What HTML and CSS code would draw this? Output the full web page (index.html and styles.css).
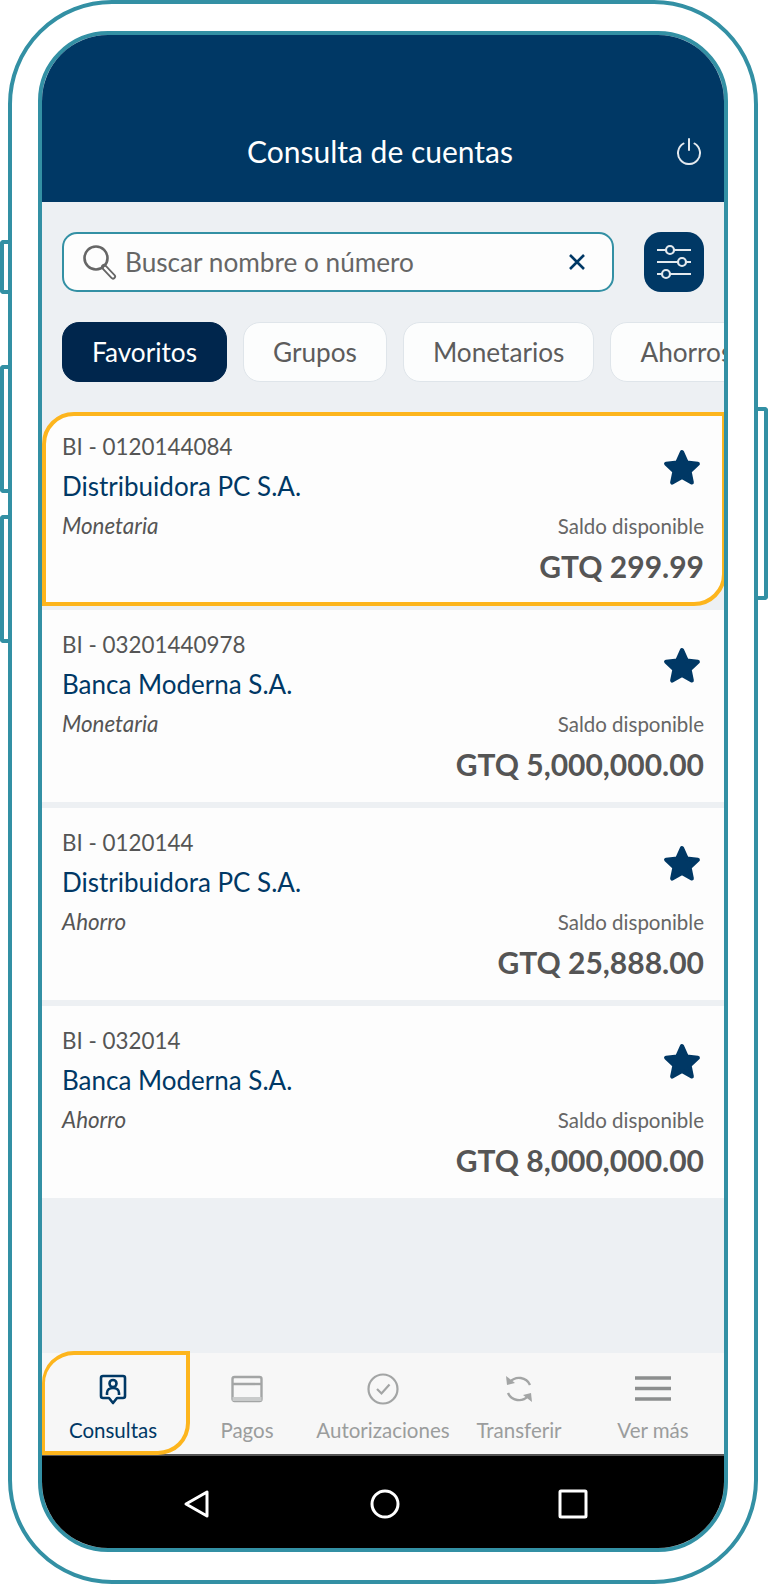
FILE: index.html
```html
<!DOCTYPE html>
<html lang="es">
  <head>
    <meta charset="UTF-8" />
    <title>Consulta de cuentas</title>
    <link rel="stylesheet" href="styles.css">
  </head>
  <body>
    <div class="phone">
      <span class="side-btn side-a"></span>
      <span class="side-btn side-b"></span>
      <span class="side-btn side-c"></span>
      <span class="side-btn side-d"></span>

      <div class="frame">
        <div class="screen">
          <header class="topbar">
            <span></span>
            <h1>Consulta de cuentas</h1>
            <svg class="power" viewBox="0 0 28 28" fill="none" stroke="#e4e9ee" stroke-width="2" stroke-linecap="round">
              <path d="M14 2v11" />
              <path d="M8.5 6.5a11 11 0 1 0 11 0" />
            </svg>
          </header>

          <div class="search-row">
            <div class="search">
              <svg class="search-icon" viewBox="0 0 36 36" fill="none" stroke="#666">
                <circle cx="14" cy="14" r="11.5" stroke-width="2.6" />
                <path d="M22 23l9 9.5" stroke-width="6" stroke-linecap="round" />
                <path d="M23 24l8 8.5" stroke="#fff" stroke-width="2.4" stroke-linecap="round" />
              </svg>
              <span class="search-text">Buscar nombre o número</span>
              <svg class="clear" viewBox="0 0 18 18" fill="none" stroke="#003865" stroke-width="2.6">
                <path d="M2 2l14 14M16 2L2 16" />
              </svg>
            </div>
            <button class="filter">
              <svg viewBox="0 0 36 36" fill="none" stroke="#e4e9ee" stroke-width="2.2">
                <path d="M1 6h9M18 6h17M1 18h21M30 18h5M1 30h5M14 30h21" />
                <circle cx="14" cy="6" r="4" />
                <circle cx="26" cy="18" r="4" />
                <circle cx="10" cy="30" r="4" />
              </svg>
            </button>
          </div>

          <div class="chips">
            <span class="chip active">Favoritos</span>
            <span class="chip">Grupos</span>
            <span class="chip">Monetarios</span>
            <span class="chip">Ahorros</span>
          </div>

          <div class="accounts">
            <div class="card focus">
              <div class="card-left">
                <p class="acc-no">BI - 0120144084</p>
                <p class="acc-name">Distribuidora PC S.A.</p>
                <p class="acc-type">Monetaria</p>
              </div>
              <div class="card-right">
                <svg class="star" viewBox="0 0 34 34"><path d="M17 5l3.8 8.4 9 1-6.7 6.2 1.8 8.9-7.9-4.4-7.9 4.4 1.8-8.9-6.7-6.2 9-1z" /></svg>
                <p class="balance-label">Saldo disponible</p>
                <p class="balance">GTQ 299.99</p>
              </div>
            </div>
            <div class="card">
              <div class="card-left">
                <p class="acc-no">BI - 03201440978</p>
                <p class="acc-name">Banca Moderna S.A.</p>
                <p class="acc-type">Monetaria</p>
              </div>
              <div class="card-right">
                <svg class="star" viewBox="0 0 34 34"><path d="M17 5l3.8 8.4 9 1-6.7 6.2 1.8 8.9-7.9-4.4-7.9 4.4 1.8-8.9-6.7-6.2 9-1z" /></svg>
                <p class="balance-label">Saldo disponible</p>
                <p class="balance">GTQ 5,000,000.00</p>
              </div>
            </div>
            <div class="card">
              <div class="card-left">
                <p class="acc-no">BI - 0120144</p>
                <p class="acc-name">Distribuidora PC S.A.</p>
                <p class="acc-type">Ahorro</p>
              </div>
              <div class="card-right">
                <svg class="star" viewBox="0 0 34 34"><path d="M17 5l3.8 8.4 9 1-6.7 6.2 1.8 8.9-7.9-4.4-7.9 4.4 1.8-8.9-6.7-6.2 9-1z" /></svg>
                <p class="balance-label">Saldo disponible</p>
                <p class="balance">GTQ 25,888.00</p>
              </div>
            </div>
            <div class="card">
              <div class="card-left">
                <p class="acc-no">BI - 032014</p>
                <p class="acc-name">Banca Moderna S.A.</p>
                <p class="acc-type">Ahorro</p>
              </div>
              <div class="card-right">
                <svg class="star" viewBox="0 0 34 34"><path d="M17 5l3.8 8.4 9 1-6.7 6.2 1.8 8.9-7.9-4.4-7.9 4.4 1.8-8.9-6.7-6.2 9-1z" /></svg>
                <p class="balance-label">Saldo disponible</p>
                <p class="balance">GTQ 8,000,000.00</p>
              </div>
            </div>
          </div>

          <nav class="tabs">
            <div class="tab current">
              <svg viewBox="0 0 36 36" fill="none" stroke="#003865" stroke-width="2.6" stroke-linejoin="round">
                <path d="M8 5h20a2 2 0 0 1 2 2v18a2 2 0 0 1-2 2h-6l-4 5-4-5H8a2 2 0 0 1-2-2V7a2 2 0 0 1 2-2z" />
                <circle cx="18" cy="12.5" r="3.5" />
                <path d="M12 24v-2c0-3 2.5-5 6-5s6 2 6 5v2" />
              </svg>
              <span>Consultas</span>
            </div>
            <div class="tab">
              <svg viewBox="0 0 36 36" fill="none" stroke="#a3a5a5" stroke-width="2.4">
                <rect x="3.5" y="6" width="29" height="24" rx="2" />
                <path d="M3.5 13h29" />
                <path d="M3.5 26h29v4h-29z" fill="#c9cbcb" stroke="none" />
              </svg>
              <span>Pagos</span>
            </div>
            <div class="tab">
              <svg viewBox="0 0 36 36" fill="none" stroke="#a3a5a5" stroke-width="2.2">
                <circle cx="18" cy="18" r="14.5" />
                <path d="M12 18l4.5 4.5 8-9" />
              </svg>
              <span>Autorizaciones</span>
            </div>
            <div class="tab">
              <svg viewBox="0 0 36 36" fill="none" stroke="#a3a5a5" stroke-width="2.4">
                <path d="M9 11a12 12 0 0 1 20 3" />
                <path d="M27 25a12 12 0 0 1-20-3" />
                <path d="M5 5l1 9 8-2z" fill="#a3a5a5" stroke="none" />
                <path d="M31 31l-1-9-8 2z" fill="#a3a5a5" stroke="none" />
              </svg>
              <span>Transferir</span>
            </div>
            <div class="tab">
              <svg viewBox="0 0 36 36" fill="none" stroke="#8c8e8e" stroke-width="3.4">
                <path d="M0 7h36M0 17.5h36M0 28h36" />
              </svg>
              <span>Ver más</span>
            </div>
          </nav>

          <div class="android">
            <svg class="nav-back" viewBox="0 0 28 30" fill="none" stroke="#fff" stroke-width="3" stroke-linejoin="round">
              <path d="M24 3v24L3 15z" />
            </svg>
            <svg class="nav-home" viewBox="0 0 30 30" fill="none" stroke="#fff" stroke-width="3">
              <circle cx="15" cy="15" r="13" />
            </svg>
            <svg class="nav-recent" viewBox="0 0 30 30" fill="none" stroke="#fff" stroke-width="3" stroke-linejoin="round">
              <rect x="2" y="2" width="26" height="26" rx="1" />
            </svg>
          </div>
        </div>
      </div>
    </div>
  </body>
</html>
```

FILE: styles.css
```css
body {
  margin: 0;
  background-color: #fff;
  font-family: "Lato", "Open Sans", sans-serif;
}

p {
  margin: 0;
}

.phone {
  position: relative;
  width: 768px;
  height: 1585px;
  overflow: hidden;
  padding-left: 8px;
  box-sizing: border-box;
}

.side-btn {
  position: absolute;
  box-sizing: border-box;
  border: 4px solid #3390a4;
  width: 9px;
}

.side-a,
.side-b,
.side-c {
  left: 0;
  border-right: 0;
  border-radius: 4px 0 0 4px;
}

.side-a {
  top: 240px;
  height: 54px;
}

.side-b {
  top: 365px;
  height: 128px;
}

.side-c {
  top: 515px;
  height: 128px;
}

.side-d {
  left: 757px;
  top: 407px;
  width: 11px;
  height: 193px;
  border-left: 0;
  border-radius: 0 4px 4px 0;
}

.frame {
  width: 750px;
  height: 1584px;
  box-sizing: border-box;
  border: 4px solid #3390a4;
  border-radius: 104px;
  padding: 27px 26px 28px;
  background-color: #fff;
}

.screen {
  height: 100%;
  box-sizing: border-box;
  border: 4px solid #3390a4;
  border-radius: 70px;
  background-color: #edf0f3;
  overflow: hidden;
  display: flex;
  flex-direction: column;
}

.topbar {
  height: 167px;
  flex-shrink: 0;
  box-sizing: border-box;
  background-color: #003865;
  display: grid;
  grid-template-columns: 1fr auto 1fr;
  align-items: center;
  padding: 93px 21px 28px 15px;
}

.topbar h1 {
  margin: 0;
  font-size: 30px;
  font-weight: 400;
  color: #fff;
  line-height: 44px;
}

.power {
  width: 28px;
  height: 28px;
  justify-self: end;
}

.search-row {
  display: flex;
  gap: 30px;
  margin-top: 30px;
  padding: 0 20px;
}

.search {
  flex: 1;
  height: 60px;
  box-sizing: border-box;
  border: 2px solid #3390a4;
  border-radius: 15px;
  background-color: #fdfdfd;
  display: flex;
  align-items: center;
  padding: 0 26px 0 18px;
}

.search-icon {
  width: 36px;
  height: 36px;
  margin-right: 7px;
}

.search-text {
  flex: 1;
  font-size: 26.2px;
  color: #666;
}

.clear {
  width: 18px;
  height: 18px;
}

.filter {
  width: 60px;
  height: 60px;
  border: 0;
  border-radius: 17px;
  padding: 0;
  background-color: #003865;
  display: flex;
  align-items: center;
  justify-content: center;
}

.filter svg {
  width: 36px;
  height: 36px;
}

.chips {
  display: flex;
  gap: 16px;
  margin-top: 30px;
  padding-left: 20px;
  overflow: hidden;
}

.chip {
  flex-shrink: 0;
  height: 60px;
  box-sizing: border-box;
  padding: 0 29px;
  border: 1px solid #dfe5ea;
  border-radius: 17px;
  background-color: #fcfdfd;
  font-size: 26.2px;
  line-height: 58px;
  color: #5c5c5c;
}

.chip.active {
  background-color: #00264d;
  border-color: #00264d;
  color: #fff;
}

.accounts {
  margin-top: 30px;
  flex: 1;
  display: flex;
  flex-direction: column;
  gap: 6px;
}

.card {
  height: 192px;
  box-sizing: border-box;
  padding: 22px 20px 0;
  background-color: #fdfdfd;
  display: flex;
  justify-content: space-between;
}

.card.focus {
  height: 194px;
  margin: 0 -2px -2px 0;
  padding: 18px 18px 0 16px;
  border: 4px solid #fdb51d;
  border-radius: 32px 0 32px 0;
}

.acc-no {
  font-size: 22.4px;
  line-height: 26px;
  color: #555;
}

.acc-name {
  margin-top: 10px;
  font-size: 26px;
  line-height: 32px;
  color: #003865;
}

.acc-type {
  margin-top: 11px;
  font-size: 22.4px;
  line-height: 26px;
  font-style: italic;
  color: #555;
}

.card-right {
  display: flex;
  flex-direction: column;
  align-items: flex-end;
}

.star {
  width: 42px;
  height: 42px;
  margin: 12px 1px 0 0;
  fill: #003865;
  stroke: #003865;
  stroke-width: 3.4;
  stroke-linejoin: round;
}

.balance-label {
  margin-top: 25px;
  font-size: 20.5px;
  line-height: 26px;
  color: #666;
}

.balance {
  margin-top: 9px;
  font-size: 30px;
  line-height: 36px;
  font-weight: 700;
  color: #555;
}

.tabs {
  height: 103px;
  flex-shrink: 0;
  box-sizing: border-box;
  background-color: #f7f7f7;
  border-bottom: 2px solid #555;
  display: grid;
  grid-template-columns: 148px 114px 158px 114px 1fr;
}

.tab {
  display: flex;
  flex-direction: column;
  align-items: center;
  padding-top: 18px;
  font-size: 20.5px;
  color: #9b9d9d;
}

.tab svg {
  width: 36px;
  height: 36px;
}

.tab span {
  margin-top: 11px;
  line-height: 24px;
  white-space: nowrap;
}

.tab:last-child {
  padding-left: 6px;
}

.tab.current {
  position: relative;
  margin: -2px 0 -1px;
  padding: 16px 5px 0 0;
  border: 4px solid #fdb51d;
  border-left-width: 3px;
  border-radius: 32px 0 32px 0;
  color: #003865;
}

.android {
  height: 92px;
  flex-shrink: 0;
  box-sizing: border-box;
  background-color: #000;
  display: grid;
  grid-template-columns: repeat(3, 188px);
  align-items: center;
  justify-items: center;
  padding: 3px 0 0 61px;
}

.nav-back {
  width: 28px;
  height: 30px;
}

.nav-home,
.nav-recent {
  width: 30px;
  height: 30px;
}
```
